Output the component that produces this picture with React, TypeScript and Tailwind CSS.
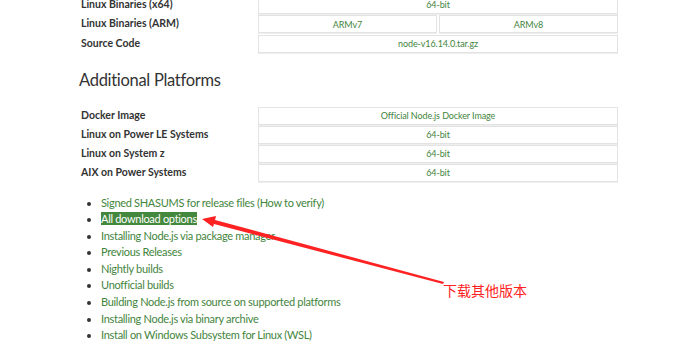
import React from "react";

const F = { fontFamily: "Lato, 'Open Sans', sans-serif" };

function Row({ label, cells, h }: { label: string; cells: string[]; h: string }) {
  return (
    <div className={"flex items-center " + h}>
      <div className="w-[179px] text-[10.5px] font-bold text-[#333] pl-[2px]">{label}</div>
      <div className="w-[360px] flex gap-[2px] h-[18px]">
        {cells.map((c, i) => (
          <div
            key={i}
            className="flex-1 flex items-center justify-center border border-[#e3e3e3] shadow-[0_1px_0_#eee] text-[9px] tracking-[-0.1px] text-[#43853d]"
          >
            {c}
          </div>
        ))}
      </div>
    </div>
  );
}

const links = [
  "Signed SHASUMS for release files (How to verify)",
  "All download options",
  "Installing Node.js via package manager",
  "Previous Releases",
  "Nightly builds",
  "Unofficial builds",
  "Building Node.js from source on supported platforms",
  "Installing Node.js via binary archive",
  "Install on Windows Subsystem for Linux (WSL)",
];

export default function App() {
  return (
    <div className="relative w-[692px] h-[361px] overflow-hidden bg-white" style={F}>
      <div className="pl-[79px] -mt-[5px]">
        <Row h="h-[19.5px]" label="Linux Binaries (x64)" cells={["64-bit"]} />
        <Row h="h-[19.5px]" label="Linux Binaries (ARM)" cells={["ARMv7", "ARMv8"]} />
        <Row h="h-[19.5px]" label="Source Code" cells={["node-v16.14.0.tar.gz"]} />
        <h2 className="mt-[14px] mb-[15px] text-[16.5px] tracking-[-0.3px] leading-[24px] text-[#333] font-normal">
          Additional Platforms
        </h2>
        <Row h="h-[19px]" label="Docker Image" cells={["Official Node.js Docker Image"]} />
        <Row h="h-[19px]" label="Linux on Power LE Systems" cells={["64-bit"]} />
        <Row h="h-[19px]" label="Linux on System z" cells={["64-bit"]} />
        <Row h="h-[19px]" label="AIX on Power Systems" cells={["64-bit"]} />
        <ul className="mt-[12px] pl-[22px] list-disc text-[11px] tracking-[-0.3px] leading-[16.6px] text-[#43853d] marker:text-[#333]">
          {links.map((l, i) => (
            <li key={i}>
              {i === 1 ? <span className="bg-[#44883e] text-white">{l}</span> : l}
            </li>
          ))}
        </ul>
      </div>
      <svg className="absolute left-0 top-0" width="692" height="361">
        <polygon points="202,219 216,216 215,220 444,282 443,284 214,224 213,227" fill="#f22" />
      </svg>
      <div
        className="absolute left-[443px] top-[280px] text-[14px] text-[#f22]"
        style={{ fontFamily: "'Noto Sans CJK SC', sans-serif" }}
      >
        下载其他版本
      </div>
    </div>
  );
}
